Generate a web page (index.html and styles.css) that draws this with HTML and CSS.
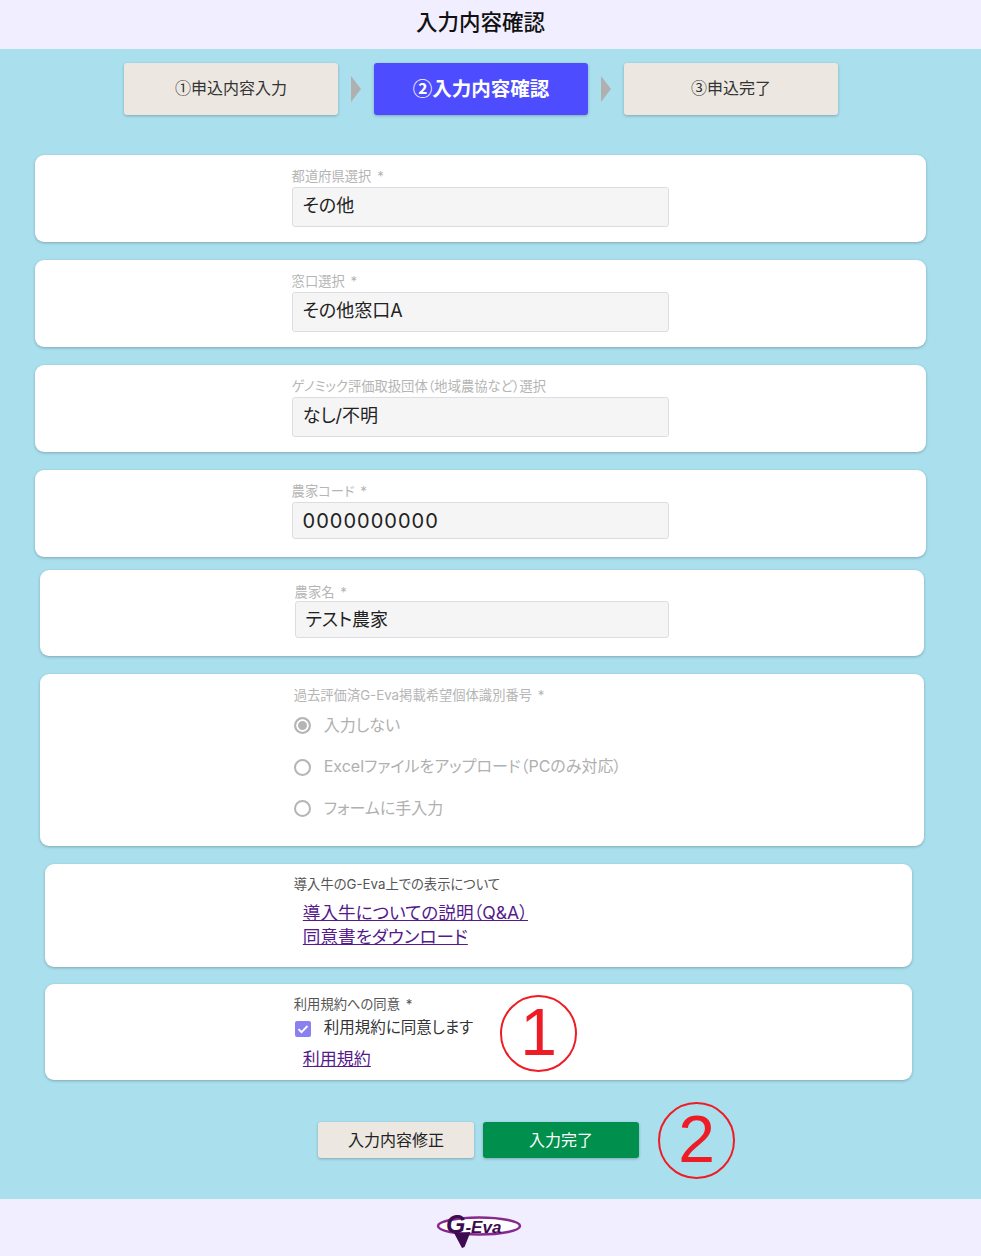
FILE: index.html
```html
<!DOCTYPE html>
<html lang="ja">

<head>
    <meta charset="UTF-8">
    <title>入力内容確認</title>
    <link rel="stylesheet" href="styles.css">
</head>

<body>

    <!-- Header -->
    <header class="page-header">
        <h1>入力内容確認</h1>
    </header>

    <!-- Steps -->
    <div class="steps">
        <div class="step">①申込内容入力</div>
        <div class="step-arrow"></div>
        <div class="step step-active">②入力内容確認</div>
        <div class="step-arrow"></div>
        <div class="step">③申込完了</div>
    </div>

    <!-- Form -->
    <main class="form">
        <section class="card card-wide">
            <div class="field">
                <div class="label label-muted">都道府県選択 *</div>
                <div class="value">その他</div>
            </div>
        </section>

        <section class="card card-wide">
            <div class="field">
                <div class="label label-muted">窓口選択 *</div>
                <div class="value">その他窓口A</div>
            </div>
        </section>

        <section class="card card-wide">
            <div class="field">
                <div class="label label-muted">ゲノミック評価取扱団体（地域農協など）選択</div>
                <div class="value">なし/不明</div>
            </div>
        </section>

        <section class="card card-wide card-short">
            <div class="field">
                <div class="label label-muted">農家コード *</div>
                <div class="value value-short value-code">0000000000</div>
            </div>
        </section>

        <section class="card card-mid card-name">
            <div class="field">
                <div class="label label-muted">農家名 *</div>
                <div class="value value-short">テスト農家</div>
            </div>
        </section>

        <section class="card card-mid card-radios">
            <div class="field">
                <div class="label label-muted">過去評価済G-Eva掲載希望個体識別番号 *</div>
                <div class="radio radio-on"><span class="radio-mark"></span>入力しない</div>
                <div class="radio"><span class="radio-mark"></span>Excelファイルをアップロード（PCのみ対応）</div>
                <div class="radio"><span class="radio-mark"></span>フォームに手入力</div>
            </div>
        </section>

        <section class="card card-narrow card-links">
            <div class="field">
                <div class="label">導入牛のG-Eva上での表示について</div>
                <a class="doc-link" href="#">導入牛についての説明（Q&amp;A）</a>
                <a class="doc-link" href="#">同意書をダウンロード</a>
            </div>
        </section>

        <section class="card card-narrow card-terms">
            <div class="field">
                <div class="label">利用規約への同意 *</div>
                <div class="check">
                    <span class="check-box">
                        <svg width="16" height="16" viewBox="0 0 16 16">
                            <path d="M3.5 8.2l3 3 6-6.2" fill="none" stroke="#fff" stroke-width="1.8"/>
                        </svg>
                    </span>
                    利用規約に同意します
                </div>
                <a class="terms-link" href="#">利用規約</a>
            </div>
            <div class="mark mark-one">1</div>
        </section>

        <div class="buttons">
            <button class="btn">入力内容修正</button>
            <button class="btn btn-done">入力完了</button>
            <div class="mark mark-two">2</div>
        </div>
    </main>

    <!-- Footer -->
    <footer class="page-footer">
        <svg class="logo" width="88" height="40" viewBox="0 0 88 40">
            <ellipse cx="44" cy="16" rx="41" ry="8.5" fill="#fff" stroke="#87288f" stroke-width="2.5"/>
            <path d="M19 23l8 15 2.500-1 6-15z" fill="#3d0d50"/>
            <text class="logo-text" x="11" y="23"><tspan class="logo-g">G</tspan>-Eva</text>
        </svg>
    </footer>

</body>

</html>
```

FILE: styles.css
```css
body {
    font-family: Inter, "Noto Sans CJK JP", "Noto Sans", sans-serif;
    font-feature-settings: "palt";
    margin: 0;
    background-color: #aadfee;
    color: #333;
}

.page-header {
    box-sizing: border-box;
    height: 49px;
    padding: 0 20px 8px 0;
    background-color: #f0eeff;
    display: flex;
    align-items: center;
    justify-content: center;
}

.page-header h1 {
    margin: 0;
    font-size: 21.5px;
    font-weight: 500;
    color: #111;
}

.steps {
    display: flex;
    align-items: center;
    margin: 14px 0 0 124px;
}

.step {
    box-sizing: border-box;
    width: 214px;
    height: 52px;
    padding-bottom: 4px;
    background-color: #ece8e1;
    border-radius: 3px;
    box-shadow: 0 1px 3px rgba(0, 0, 0, 0.25);
    display: flex;
    align-items: center;
    justify-content: center;
    font-family: "Noto Sans CJK JP", sans-serif;
    font-size: 16px;
}

.step-active {
    background-color: #4d4dff;
    color: #fff;
    font-size: 19.5px;
    font-weight: 700;
}

.step-arrow {
    width: 0;
    height: 0;
    margin: 0 13px;
    border-left: 10px solid #b0b0b0;
    border-top: 13px solid transparent;
    border-bottom: 13px solid transparent;
}

.form {
    margin-top: 40px;
}

.card {
    position: relative;
    box-sizing: border-box;
    background-color: #fff;
    border-radius: 9px;
    box-shadow: 0 1px 3px rgba(0, 0, 0, 0.25);
    margin-bottom: 18px;
    height: 87px;
    padding-top: 12px;
}

.card-wide {
    width: 891px;
    margin-left: 35px;
}

.card-short {
    margin-bottom: 13px;
}

.card-mid {
    width: 884px;
    margin-left: 40px;
}

.card-narrow {
    width: 867px;
    margin-left: 45px;
}

.card-name {
    height: 86px;
    padding-top: 13px;
}

.card-name .label {
    padding-bottom: 0;
}

.card-radios {
    height: 172px;
    padding-top: 12px;
}

.card-radios .label {
    margin-bottom: -3px;
}

.card-links {
    height: 103px;
    margin-bottom: 17px;
    padding-top: 11px;
}

.card-links .label {
    margin-bottom: 6px;
}

.card-terms {
    height: 96px;
    padding-top: 11px;
    margin-bottom: 0;
}

.field {
    width: 42.4%;
    margin: 0 auto;
}

.card-radios .field,
.card-narrow .field {
    width: 42.6%;
}

.label {
    font-size: 13.3px;
    line-height: 18px;
    padding-bottom: 2px;
    word-spacing: 2px;
    color: #555;
}

.label-muted {
    color: #b5b5b5;
}

.value {
    box-sizing: border-box;
    height: 40px;
    background-color: #f5f5f5;
    border: 1px solid #dcdde2;
    border-radius: 3px;
    padding-left: 10px;
    font-size: 18px;
    line-height: 35px;
    color: #222;
}

.value-short {
    height: 37px;
}

.value-code {
    letter-spacing: 1px;
    font-size: 20px;
    line-height: 37px;
}

.radio {
    display: flex;
    align-items: center;
    height: 41.5px;
    font-size: 16px;
    color: #b0b0b0;
}

.radio-mark {
    box-sizing: border-box;
    width: 17px;
    height: 17px;
    border: 2px solid #b5b5b5;
    border-radius: 50%;
    margin: 4px 13px 0 0;
    background-color: #fff;
}

.radio-on .radio-mark {
    background-color: #b5b5b5;
    box-shadow: inset 0 0 0 2px #fff;
}

.doc-link,
.terms-link {
    display: block;
    color: #551a8b;
    margin-left: 9px;
}

.doc-link {
    font-size: 17.6px;
    line-height: 24px;
}

.check {
    display: flex;
    align-items: center;
    height: 22px;
    padding-bottom: 6px;
    font-size: 15.5px;
    color: #333;
}

.check-box {
    width: 16px;
    height: 16px;
    background-color: #8a80f0;
    border-radius: 2px;
    margin: 5px 13px 0 1px;
}

.check-box svg {
    display: block;
}

.terms-link {
    font-size: 17px;
    line-height: 24px;
    margin-top: 4px;
}

.buttons {
    position: relative;
    display: flex;
    justify-content: center;
    gap: 9px;
    width: 961px;
    margin: 42px 0 0 -2px;
}

.btn {
    width: 156px;
    height: 36px;
    border: none;
    border-radius: 3px;
    background-color: #ece8e1;
    box-shadow: 0 1px 3px rgba(0, 0, 0, 0.25);
    font-family: inherit;
    font-feature-settings: inherit;
    font-size: 16px;
    padding-bottom: 4px;
    color: #222;
}

.btn-done {
    background-color: #008f4c;
    color: #fff;
}

.mark {
    position: absolute;
    box-sizing: border-box;
    width: 77px;
    height: 77px;
    border: 2px solid #ee1c25;
    border-radius: 50%;
    font-family: "Liberation Sans", sans-serif;
    font-size: 66px;
    line-height: 71px;
    text-align: center;
    color: #ee1c25;
}

.mark-one {
    left: 455px;
    top: 11px;
}

.mark-two {
    left: 660px;
    top: -20px;
}

.page-footer {
    box-sizing: border-box;
    height: 57px;
    margin-top: 41px;
    padding-right: 20px;
    background-color: #f0eeff;
    display: flex;
    align-items: center;
    justify-content: center;
}

.logo {
    margin: 5px 3px 0 0;
}

.logo-text {
    font-family: "Liberation Sans", sans-serif;
    font-size: 17px;
    font-style: italic;
    font-weight: 700;
    fill: #3d0d50;
}

.logo-g {
    font-size: 25px;
}
```
